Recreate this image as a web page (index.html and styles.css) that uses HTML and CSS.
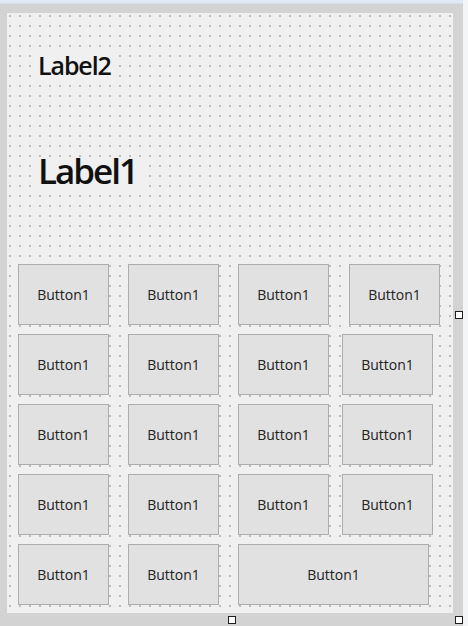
FILE: index.html
```html
<!DOCTYPE html>
<html>
<head>
<meta charset="utf-8">
<link rel="stylesheet" href="styles.css">
</head>
<body>
<div class="main">
  <div class="topbar"></div>
  <div class="canvas">
    <div class="form">
      <div class="label label2">Label2</div>
      <div class="label label1">Label1</div>
      <div class="grid">
        <div class="row">
          <div class="btn">Button1</div>
          <div class="btn">Button1</div>
          <div class="btn">Button1</div>
          <div class="btn shift-r">Button1</div>
        </div>
        <div class="row">
          <div class="btn">Button1</div>
          <div class="btn">Button1</div>
          <div class="btn">Button1</div>
          <div class="btn shift-l">Button1</div>
        </div>
        <div class="row">
          <div class="btn">Button1</div>
          <div class="btn">Button1</div>
          <div class="btn">Button1</div>
          <div class="btn shift-l">Button1</div>
        </div>
        <div class="row">
          <div class="btn">Button1</div>
          <div class="btn">Button1</div>
          <div class="btn">Button1</div>
          <div class="btn shift-l">Button1</div>
        </div>
        <div class="row">
          <div class="btn">Button1</div>
          <div class="btn">Button1</div>
          <div class="btn wide">Button1</div>
        </div>
      </div>
    </div>
  </div>
  <div class="handle h-right"></div>
  <div class="handle h-bottom"></div>
  <div class="handle h-corner"></div>
</div>
<div class="edge"></div>
</body>
</html>
```

FILE: styles.css
```css
html, body {
  margin: 0;
  padding: 0;
}
body {
  width: 468px;
  height: 626px;
  overflow: hidden;
  display: flex;
  background: #d3d3d3;
  font-family: "Open Sans", "Noto Sans", sans-serif;
}
.main {
  position: relative;
  width: 463px;
  height: 626px;
  background: #d3d3d3;
}
.edge {
  width: 5px;
  height: 626px;
  background: #f4f5f7;
}
.topbar {
  height: 4px;
  background: #dfe8f3;
  border-bottom: 1px solid #d8dee6;
  box-sizing: border-box;
}
.canvas {
  padding: 9px 10px 13px 7px;
}
.form {
  width: 446px;
  height: 600px;
  box-sizing: border-box;
  padding: 39px 0 0 11px;
  background-color: #bdbdbd;
  background-image:
    linear-gradient(to bottom, transparent 2px, #f0f0f0 2px),
    linear-gradient(to right, transparent 2px, #f0f0f0 2px);
  background-size: 10px 10px;
  background-position: 2px 2px;
  display: flex;
  flex-direction: column;
  align-items: flex-start;
}
.label {
  background: #f0f0f0;
  color: #111;
  font-weight: 600;
  margin-left: 19px;
}
.label2 {
  font-size: 25px;
  line-height: 26px;
  letter-spacing: -1.1px;
  padding: 0 4px 2px 1px;
}
.label1 {
  margin-top: 77px;
  font-size: 35px;
  line-height: 27px;
  letter-spacing: -2px;
  padding: 0 4px 6px 1px;
}
.grid {
  margin-top: 74px;
  display: flex;
  flex-direction: column;
  gap: 9px;
}
.row {
  display: flex;
  gap: 19px;
}
.btn {
  width: 91px;
  height: 61px;
  box-sizing: border-box;
  background: #e1e1e1;
  border: 1px solid #adadad;
  color: #222;
  font-size: 14px;
  display: flex;
  align-items: center;
  justify-content: center;
}
.btn.shift-r {
  margin-left: 1px;
}
.btn.shift-l {
  margin-left: -6px;
}
.btn.wide {
  width: 191px;
}
.handle {
  position: absolute;
  width: 8px;
  height: 8px;
  box-sizing: border-box;
  background: #ffffff;
  border: 1px solid #1e1e1e;
}
.h-right {
  left: 455px;
  top: 311px;
}
.h-bottom {
  left: 228px;
  top: 616px;
}
.h-corner {
  left: 455px;
  top: 616px;
}
```
